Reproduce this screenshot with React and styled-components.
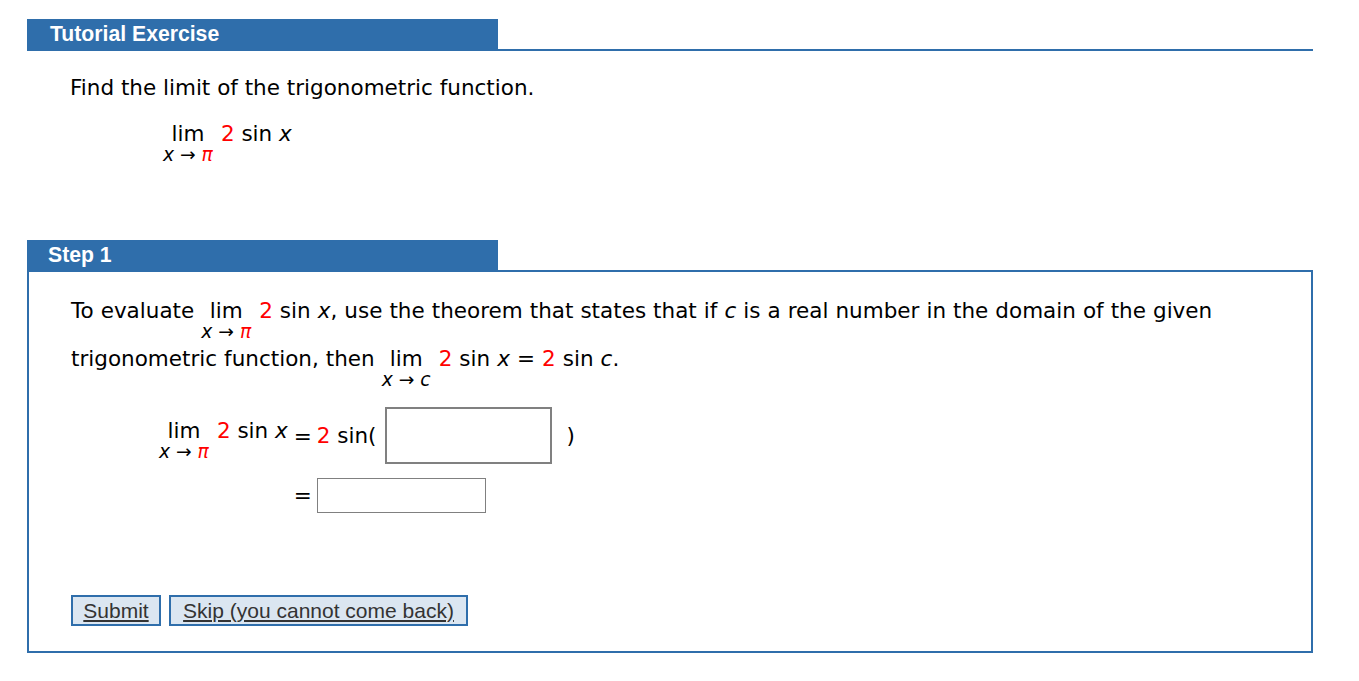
import React from "react";
import styled, { createGlobalStyle } from "styled-components";

const BLUE = "#2f6eab";

const Global = createGlobalStyle`
  html, body { margin: 0; padding: 0; background: #fff; }
  body { font-family: "DejaVu Sans", Verdana, sans-serif; color: #000; }
`;

const Page = styled.div`
  padding: 19px 0 0 27px;
  width: 1286px;
`;

const HeaderRow = styled.div`
  display: flex;
  border-bottom: 2px solid ${BLUE};
`;

const Tab = styled.div`
  width: 471px;
  height: 30px;
  box-sizing: border-box;
  background: ${BLUE};
  color: #fff;
  font-family: "Liberation Sans", Arial, sans-serif;
  font-weight: bold;
  font-size: 21.2px;
  line-height: 30px;
  padding-left: ${(p) => p.$pl}px;
`;

const Intro = styled.div`
  box-sizing: border-box;
  height: 189px;
  padding: 25px 0 0 43px;
`;

const Para = styled.p`
  margin: ${(p) => p.$m || 0};
  font-size: 21.5px;
  line-height: ${(p) => p.$lh || "24px"};
  word-spacing: ${(p) => p.$ws || 0}px;
`;

const Lim = styled.span`
  display: inline-flex;
  flex-direction: column;
  align-items: center;
  vertical-align: baseline;
  margin-right: 8px;
  line-height: 22px;
  word-spacing: 0;
`;

const Sub = styled.span`
  font-size: 18.7px;
  line-height: 20px;
  white-space: nowrap;
`;

const Red = styled.span`
  color: #f00;
`;

const I = styled.i`
  font-style: italic;
  color: ${(p) => (p.$red ? "#f00" : "inherit")};
`;

const Box = styled.div`
  box-sizing: border-box;
  height: 381px;
  border: 2px solid ${BLUE};
  border-top: none;
  padding: 22px 0 0 42px;
`;

const EqGrid = styled.div`
  display: grid;
  grid-template-columns: auto auto auto;
  column-gap: 3px;
  row-gap: 14px;
  align-items: center;
  width: max-content;
  margin: 17px 0 0 88px;
  font-size: 21.5px;
  line-height: 24px;
`;

const LimCell = styled.div`
  align-self: start;
  padding-top: 12px;
  display: flex;
  align-items: baseline;
`;

const Cell = styled.div`
  display: flex;
  align-items: center;
`;

const EqSign = styled.div`
  padding: ${(p) => p.$pt || 0}px 2px 0 3px;
`;

const Input = styled.input`
  box-sizing: border-box;
  width: ${(p) => p.$w}px;
  height: ${(p) => p.$h}px;
  border: ${(p) => p.$b}px solid #808080;
  margin: ${(p) => p.$m || 0};
  padding: 0;
  background: #fff;
  font: inherit;
`;

const Buttons = styled.div`
  display: flex;
  gap: 8px;
  margin-top: 82px;
`;

const Btn = styled.button`
  box-sizing: border-box;
  width: ${(p) => p.$w}px;
  height: 31px;
  padding: 0;
  background: #dbe6f1;
  border: 2px solid ${BLUE};
  color: #333;
  font-family: "Liberation Sans", Arial, sans-serif;
  font-size: 21px;
  line-height: 24px;
  text-decoration: underline;
  cursor: pointer;
`;

const LimX = ({ to }) => (
  <Lim>
    <span>lim</span>
    <Sub>
      <I>x</I> → {to}
    </Sub>
  </Lim>
);

const Pi = () => <I $red>π</I>;

export default function App() {
  return (
    <>
      <Global />
      <Page>
        <HeaderRow>
          <Tab $pl={23}>Tutorial Exercise</Tab>
        </HeaderRow>
        <Intro>
          <Para>Find the limit of the trigonometric function.</Para>
          <Para $m="22px 0 0 93px">
            <LimX to={<Pi />} />
            <Red>2</Red> sin <I>x</I>
          </Para>
        </Intro>
        <HeaderRow>
          <Tab $pl={21}>Step 1</Tab>
        </HeaderRow>
        <Box>
          <Para $lh="34px" $ws={0.2}>
            To evaluate <LimX to={<Pi />} />
            <Red>2</Red> sin <I>x</I>, use the theorem that states that if <I>c</I> is a real number in the domain of the given
            <br />
            trigonometric function, then <LimX to={<I>c</I>} />
            <Red>2</Red> sin <I>x</I> = <Red>2</Red> sin <I>c</I>.
          </Para>
          <EqGrid>
            <LimCell>
              <LimX to={<Pi />} />
              <span>
                <Red>2</Red> sin <I>x</I>
              </span>
            </LimCell>
            <EqSign $pt={3}>=</EqSign>
            <Cell>
              <span>
                <Red>2</Red> sin(
              </span>
              <Input $w={167} $h={57} $b={2} $m="0 15px 0 8px" aria-label="answer 1" />
              <span>)</span>
            </Cell>
            <Cell />
            <EqSign>=</EqSign>
            <Cell>
              <Input $w={169} $h={35} $b={1} aria-label="answer 2" />
            </Cell>
          </EqGrid>
          <Buttons>
            <Btn $w={90}>Submit</Btn>
            <Btn $w={299}>Skip (you cannot come back)</Btn>
          </Buttons>
        </Box>
      </Page>
    </>
  );
}
